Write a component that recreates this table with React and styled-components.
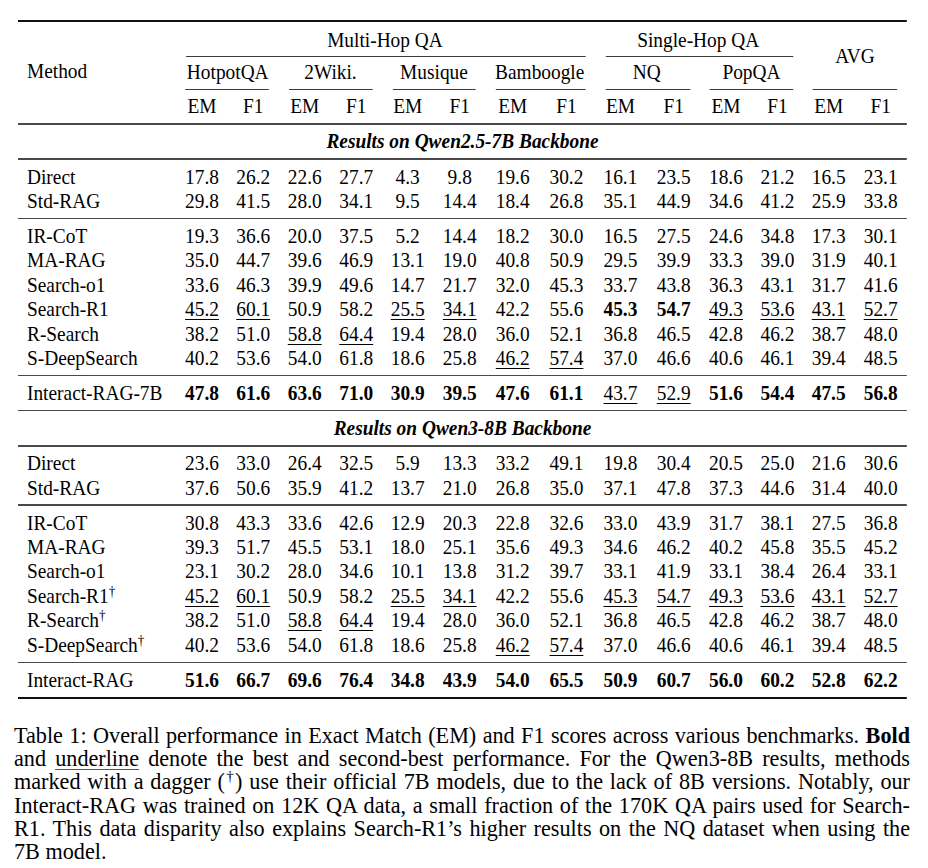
import React from 'react';
import styled, { createGlobalStyle } from 'styled-components';

// the table in the picture is squeezed sideways, so it is laid out wide and scaled down
const SX = 0.88;
const px = (w) => `${(w / SX).toFixed(2)}px`;
const colWidths = [158.5, 51, 51.5, 51.5, 51.5, 51.5, 52.5, 53.5, 54, 54, 52.5, 52, 51, 51.5, 52.5];
const gridCols = colWidths.map(px).join(' ');

const groups = [
  { name: 'HotpotQA', col: '2 / 4', l: 8.5, r: 10 },
  { name: '2Wiki.', col: '4 / 6', l: 10, r: 9 },
  { name: 'Musique', col: '6 / 8', l: 11, r: 10 },
  { name: 'Bamboogle', col: '8 / 10', l: 10, r: 7.5 },
  { name: 'NQ', col: '10 / 12', l: 12.5, r: 10 },
  { name: 'PopQA', col: '12 / 14', l: 10, r: 10 },
];

const sections = [
  {
    title: 'Results on Qwen2.5-7B Backbone',
    blocks: [
      [
        ['Direct', '17.8 26.2 22.6 27.7 4.3 9.8 19.6 30.2 16.1 23.5 18.6 21.2 16.5 23.1'],
        ['Std-RAG', '29.8 41.5 28.0 34.1 9.5 14.4 18.4 26.8 35.1 44.9 34.6 41.2 25.9 33.8'],
      ],
      [
        ['IR-CoT', '19.3 36.6 20.0 37.5 5.2 14.4 18.2 30.0 16.5 27.5 24.6 34.8 17.3 30.1'],
        ['MA-RAG', '35.0 44.7 39.6 46.9 13.1 19.0 40.8 50.9 29.5 39.9 33.3 39.0 31.9 40.1'],
        ['Search-o1', '33.6 46.3 39.9 49.6 14.7 21.7 32.0 45.3 33.7 43.8 36.3 43.1 31.7 41.6'],
        ['Search-R1', '_45.2 _60.1 50.9 58.2 _25.5 _34.1 42.2 55.6 *45.3 *54.7 _49.3 _53.6 _43.1 _52.7'],
        ['R-Search', '38.2 51.0 _58.8 _64.4 19.4 28.0 36.0 52.1 36.8 46.5 42.8 46.2 38.7 48.0'],
        ['S-DeepSearch', '40.2 53.6 54.0 61.8 18.6 25.8 _46.2 _57.4 37.0 46.6 40.6 46.1 39.4 48.5'],
      ],
      [
        ['Interact-RAG-7B', '*47.8 *61.6 *63.6 *71.0 *30.9 *39.5 *47.6 *61.1 _43.7 _52.9 *51.6 *54.4 *47.5 *56.8'],
      ],
    ],
  },
  {
    title: 'Results on Qwen3-8B Backbone',
    blocks: [
      [
        ['Direct', '23.6 33.0 26.4 32.5 5.9 13.3 33.2 49.1 19.8 30.4 20.5 25.0 21.6 30.6'],
        ['Std-RAG', '37.6 50.6 35.9 41.2 13.7 21.0 26.8 35.0 37.1 47.8 37.3 44.6 31.4 40.0'],
      ],
      [
        ['IR-CoT', '30.8 43.3 33.6 42.6 12.9 20.3 22.8 32.6 33.0 43.9 31.7 38.1 27.5 36.8'],
        ['MA-RAG', '39.3 51.7 45.5 53.1 18.0 25.1 35.6 49.3 34.6 46.2 40.2 45.8 35.5 45.2'],
        ['Search-o1', '23.1 30.2 28.0 34.6 10.1 13.8 31.2 39.7 33.1 41.9 33.1 38.4 26.4 33.1'],
        ['Search-R1', '_45.2 _60.1 50.9 58.2 _25.5 _34.1 42.2 55.6 _45.3 _54.7 _49.3 _53.6 _43.1 _52.7', true],
        ['R-Search', '38.2 51.0 _58.8 _64.4 19.4 28.0 36.0 52.1 36.8 46.5 42.8 46.2 38.7 48.0', true],
        ['S-DeepSearch', '40.2 53.6 54.0 61.8 18.6 25.8 _46.2 _57.4 37.0 46.6 40.6 46.1 39.4 48.5', true],
      ],
      [
        ['Interact-RAG', '*51.6 *66.7 *69.6 *76.4 *34.8 *43.9 *54.0 *65.5 *50.9 *60.7 *56.0 *60.2 *52.8 *62.2'],
      ],
    ],
  },
];

const GlobalStyle = createGlobalStyle`
  html, body {
    margin: 0;
    background: #fff;
  }
  body {
    color: #000;
    font-family: "Liberation Serif", "Times New Roman", serif;
  }
`;

const Page = styled.div`
  width: 928px;
  box-sizing: border-box;
  padding: 20px 0 0 14px;
  overflow: hidden;
`;

const TableClip = styled.div`
  width: 889px;
  margin-left: 4px;
  overflow: hidden;
`;

const Table = styled.div`
  width: ${px(889)};
  transform: scaleX(${SX});
  transform-origin: left top;
  font-size: 22px;
  line-height: 24.4px;
`;

const Rule = styled.div`
  height: ${(p) => (p.$heavy ? '2px' : '1.5px')};
  background: ${(p) => (p.$heavy ? '#111' : '#4a4a4a')};
  margin: ${(p) => p.$m || '4.5px 0 4.7px'};
`;

const Head = styled.div`
  display: grid;
  grid-template-columns: ${gridCols};
  grid-template-rows: 24.4px 8px 24.4px 9.6px 24.4px;
  text-align: center;
`;

const HeadCell = styled.div`
  grid-column: ${(p) => p.$col};
  grid-row: ${(p) => p.$row};
  align-self: center;
  white-space: nowrap;
`;

const MethodHead = styled(HeadCell)`
  text-align: left;
  padding: 0 0 5px ${px(9)};
`;

const CMid = styled.div`
  grid-column: ${(p) => p.$col};
  grid-row: ${(p) => p.$row};
  align-self: center;
  height: 1px;
  background: #3a3a3a;
  margin: 0 ${(p) => px(p.$r ?? 10)} 0 ${(p) => px(p.$l ?? 10)};
`;

const SectionTitle = styled.div`
  height: 24.4px;
  text-align: center;
  font-weight: 700;
  font-style: italic;
`;

const Body = styled.div`
  display: grid;
  grid-template-columns: ${gridCols};
  grid-auto-rows: 24.4px;
`;

const MethodCell = styled.div`
  padding-left: ${px(9)};
  white-space: nowrap;
`;

const Num = styled.div`
  text-align: center;
  font-weight: ${(p) => (p.$bold ? 700 : 400)};
`;

const Under = styled.span`
  text-decoration: underline;
  text-decoration-thickness: 1px;
  text-underline-offset: 2.5px;
`;

const Dagger = styled.sup`
  font-size: 0.68em;
  line-height: 0;
  vertical-align: 0.5em;
`;

const Caption = styled.div`
  width: 896px;
  margin-top: 25.5px;
  font-size: 22.2px;
  line-height: 23.2px;
`;

const CapLine = styled.div`
  text-align: justify;
  text-align-last: ${(p) => (p.$last ? 'left' : 'justify')};
`;

const CapUnder = styled.span`
  text-decoration: underline;
  text-decoration-thickness: 1px;
  text-decoration-color: #555;
  text-underline-offset: 3px;
`;

function Value({ v }) {
  if (v.startsWith('*')) return <Num $bold>{v.slice(1)}</Num>;
  if (v.startsWith('_')) return <Num><Under>{v.slice(1)}</Under></Num>;
  return <Num>{v}</Num>;
}

function Header() {
  return (
    <Head>
      <MethodHead $col="1" $row="1 / 6">Method</MethodHead>
      <HeadCell $col="2 / 10" $row="1">Multi-Hop QA</HeadCell>
      <HeadCell $col="10 / 14" $row="1">Single-Hop QA</HeadCell>
      <HeadCell $col="14 / 16" $row="1 / 4">AVG</HeadCell>
      <CMid $col="2 / 10" $row="2" $l={9.5} $r={7.5} />
      <CMid $col="10 / 14" $row="2" $l={12.5} $r={10} />
      {groups.map((g) => (
        <HeadCell key={g.name} $col={g.col} $row="3">{g.name}</HeadCell>
      ))}
      {groups.map((g) => (
        <CMid key={g.name} $col={g.col} $row="4" $l={g.l} $r={g.r} />
      ))}
      <CMid $col="14 / 16" $row="4" />
      {colWidths.slice(1).map((_, i) => (
        <HeadCell key={i} $col={`${i + 2}`} $row="5">{i % 2 === 0 ? 'EM' : 'F1'}</HeadCell>
      ))}
    </Head>
  );
}

export default function App() {
  return (
    <>
      <GlobalStyle />
      <Page>
        <TableClip>
          <Table>
            <Rule $heavy $m="0 0 6px" />
            <Header />
            {sections.map((s) => (
              <React.Fragment key={s.title}>
                <Rule />
                <SectionTitle>{s.title}</SectionTitle>
                {s.blocks.map((rows, bi) => (
                  <React.Fragment key={bi}>
                    <Rule />
                    <Body>
                      {rows.map(([name, vals, dag]) => (
                        <React.Fragment key={name}>
                          <MethodCell>
                            {name}
                            {dag && <Dagger>†</Dagger>}
                          </MethodCell>
                          {vals.split(' ').map((v, i) => (
                            <Value key={i} v={v} />
                          ))}
                        </React.Fragment>
                      ))}
                    </Body>
                  </React.Fragment>
                ))}
              </React.Fragment>
            ))}
            <Rule $heavy $m="4.5px 0 0" />
          </Table>
        </TableClip>
        <Caption>
          <CapLine>
            Table 1: Overall performance in Exact Match (EM) and F1 scores across various benchmarks. <b>Bold</b>
          </CapLine>
          <CapLine>
            and <CapUnder>underline</CapUnder> denote the best and second-best performance. For the Qwen3-8B results, methods
          </CapLine>
          <CapLine>
            marked with a dagger (<Dagger>†</Dagger>) use their official 7B models, due to the lack of 8B versions. Notably, our
          </CapLine>
          <CapLine>
            Interact-RAG was trained on 12K QA data, a small fraction of the 170K QA pairs used for Search-
          </CapLine>
          <CapLine>
            R1. This data disparity also explains Search-R1’s higher results on the NQ dataset when using the
          </CapLine>
          <CapLine $last>7B model.</CapLine>
        </Caption>
      </Page>
    </>
  );
}
